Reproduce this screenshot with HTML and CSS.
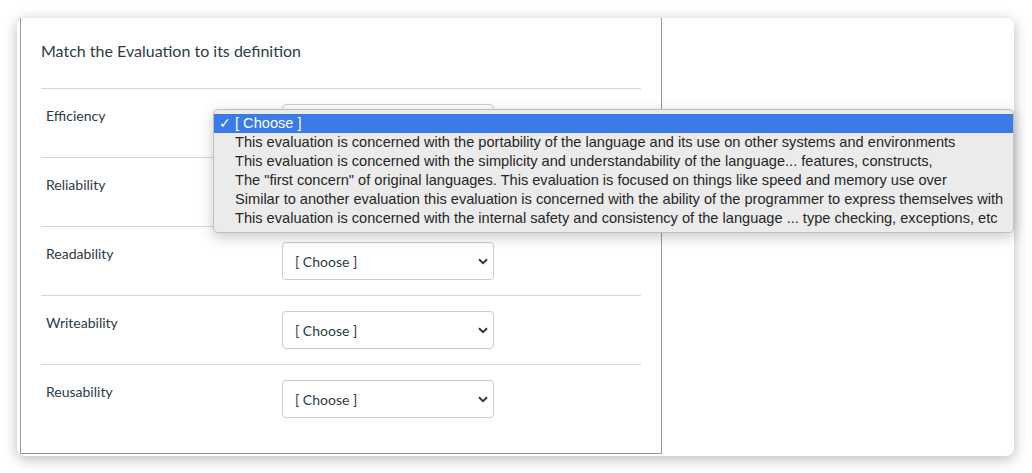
FILE: index.html
```html
<!DOCTYPE html>
<html>
<head>
<meta charset="utf-8">
<link rel="stylesheet" href="styles.css">
</head>
<body>
<div class="window">
  <div class="panel">
    <h2 class="title">Match the Evaluation to its definition</h2>
    <div class="row">
      <div class="label">Efficiency</div>
      <div class="select"><span>[ Choose ]</span><svg class="chev" width="10" height="7" viewBox="0 0 10 7"><path d="M1 1.2 L5 5.2 L9 1.2" fill="none" stroke="#2d3b45" stroke-width="2"/></svg></div>
    </div>
    <div class="row">
      <div class="label">Reliability</div>
      <div class="select"><span>[ Choose ]</span><svg class="chev" width="10" height="7" viewBox="0 0 10 7"><path d="M1 1.2 L5 5.2 L9 1.2" fill="none" stroke="#2d3b45" stroke-width="2"/></svg></div>
    </div>
    <div class="row">
      <div class="label">Readability</div>
      <div class="select"><span>[ Choose ]</span><svg class="chev" width="10" height="7" viewBox="0 0 10 7"><path d="M1 1.2 L5 5.2 L9 1.2" fill="none" stroke="#2d3b45" stroke-width="2"/></svg></div>
    </div>
    <div class="row">
      <div class="label">Writeability</div>
      <div class="select"><span>[ Choose ]</span><svg class="chev" width="10" height="7" viewBox="0 0 10 7"><path d="M1 1.2 L5 5.2 L9 1.2" fill="none" stroke="#2d3b45" stroke-width="2"/></svg></div>
    </div>
    <div class="row">
      <div class="label">Reusability</div>
      <div class="select"><span>[ Choose ]</span><svg class="chev" width="10" height="7" viewBox="0 0 10 7"><path d="M1 1.2 L5 5.2 L9 1.2" fill="none" stroke="#2d3b45" stroke-width="2"/></svg></div>
    </div>
  </div>
  <div class="side"></div>

  <ul class="menu">
    <li class="item active"><span class="check">✓</span>[ Choose ]</li>
    <li class="item"><span class="check"></span>This evaluation is concerned with the portability of the language and its use on other systems and environments</li>
    <li class="item"><span class="check"></span>This evaluation is concerned with the simplicity and understandability of the language... features, constructs,</li>
    <li class="item"><span class="check"></span>The "first concern" of original languages. This evaluation is focused on things like speed and memory use over</li>
    <li class="item"><span class="check"></span>Similar to another evaluation this evaluation is concerned with the ability of the programmer to express themselves with</li>
    <li class="item"><span class="check"></span>This evaluation is concerned with the internal safety and consistency of the language ... type checking, exceptions, etc</li>
  </ul>
</div>
</body>
</html>
```

FILE: styles.css
```css
* { box-sizing: border-box; }
html, body { margin: 0; padding: 0; background: #ffffff; }
body { padding: 18px 18px 17px 17px; }

.window {
  position: relative;
  display: flex;
  width: 997px;
  height: 438px;
  background: #ffffff;
  border-radius: 8px;
  box-shadow: 0 3px 14px rgba(0, 0, 0, 0.28);
  padding: 0 0 2px 3px;
  font-family: Lato, "Liberation Sans", sans-serif;
  color: #2d3b45;
}

.panel {
  width: 642px;
  border: 1px solid #9b9b9b;
  border-top: none;
  padding: 0 20px;
}

.side { flex: 1; }

.title {
  margin: 23px 0 27px 0;
  font-size: 16px;
  line-height: 20px;
  font-weight: 400;
}

.row {
  display: flex;
  align-items: flex-start;
  border-top: 1px solid #d7d7d7;
  padding: 15px 0 15px 0;
}

.label {
  width: 241px;
  padding: 2px 0 0 5px;
  font-size: 14px;
  line-height: 20px;
}

.select {
  width: 212px;
  height: 38px;
  border: 1px solid #c7cdd1;
  border-radius: 4px;
  display: flex;
  align-items: center;
  justify-content: space-between;
  padding: 1px 5px 0 12px;
  font-size: 14px;
  background: #fff;
}

.chev { display: block; }

.menu {
  position: absolute;
  left: 196px;
  top: 91px;
  width: 801px;
  margin: 0;
  padding: 4px 0 4px 0;
  list-style: none;
  background: #ebebeb;
  border: 1px solid rgba(0, 0, 0, 0.18);
  border-radius: 5px;
  box-shadow: 0 4px 14px rgba(0, 0, 0, 0.22);
  font-family: "Liberation Sans", Arial, sans-serif;
  font-size: 14.6px;
  color: #262626;
}

.item {
  display: flex;
  align-items: center;
  height: 19px;
  padding-bottom: 1px;
  white-space: nowrap;
  overflow: hidden;
}

.item.active {
  background: #3b7be8;
  color: #ffffff;
}

.check {
  width: 21px;
  padding-left: 5px;
  flex-shrink: 0;
  font-size: 14px;
}
```
